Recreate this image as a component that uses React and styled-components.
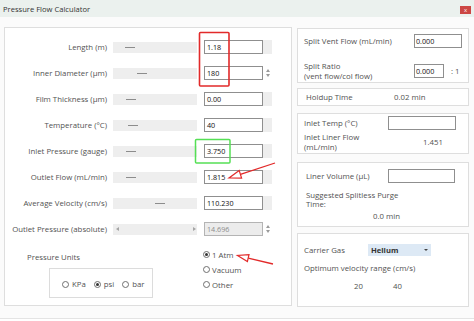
import React from 'react';
import styled, { createGlobalStyle } from 'styled-components';

const Global = createGlobalStyle`
  html, body { margin: 0; padding: 0; background: #fff; }
  body { font-family: "Open Sans", "Liberation Sans", sans-serif; }
`;

const Window = styled.div`
  position: relative;
  width: 474px;
  height: 319px;
  box-sizing: border-box;
  background: #fbfbfb;
  border-bottom: 1px solid #e4e4e4;
  font-family: "Open Sans", "Liberation Sans", sans-serif;
  font-size: 7.8px;
  color: #525252;
  overflow: hidden;
`;

const TitleBar = styled.div`
  height: 17px;
  display: flex;
  align-items: center;
  justify-content: space-between;
  padding: 0 3px;
  background: #ebf1ee;
  color: #333;
  font-size: 7.6px;
`;

const CloseBtn = styled.div`
  width: 11px;
  height: 8px;
  margin-top: 3px;
  background: #cc4744;
  color: #fff;
  font-size: 6px;
  line-height: 8px;
  text-align: center;
`;

const Body = styled.div`
  display: flex;
  gap: 5px;
  padding: 10px 0 0 4px;
`;

const LeftPanel = styled.div`
  width: 288px;
  height: 279px;
  box-sizing: border-box;
  background: #fff;
  border: 1px solid #dedede;
  padding-top: 6px;
`;

const Row = styled.div`
  height: 26px;
  display: flex;
  align-items: center;
`;

const Label = styled.div`
  width: 102px;
  text-align: right;
  white-space: nowrap;
  margin-right: 6px;
`;

const Track = styled.div`
  position: relative;
  width: 84px;
  height: 11px;
  background: #eeeeee;
  margin-right: 7px;
`;

const Thumb = styled.div`
  position: absolute;
  top: 5px;
  left: ${p => p.$at}px;
  width: 10px;
  height: 1px;
  background: #8c8c8c;
`;

const ScrollArrow = styled.div`
  position: absolute;
  top: 3px;
  ${p => (p.$dir === 'left' ? 'left: 3px;' : 'right: 1px;')}
  width: 0;
  height: 0;
  border-top: 2.5px solid transparent;
  border-bottom: 2.5px solid transparent;
  ${p => (p.$dir === 'left' ? 'border-right: 3px solid #a5a5a5;' : 'border-left: 3px solid #a5a5a5;')}
`;

const NumBox = styled.div`
  width: 59px;
  height: 14px;
  box-sizing: border-box;
  border: 1px solid ${p => (p.$disabled ? '#b4b4b4' : '#8f8f8f')};
  background: ${p => (p.$disabled ? '#ececec' : '#fff')};
  color: ${p => (p.$disabled ? '#8d8d8d' : '#111')};
  font-size: 7.2px;
  line-height: 12px;
  padding-left: 2px;
`;

const Strip = styled.div`
  width: 9px;
  height: 14px;
  background: ${p => (p.$plain ? '#fff' : '#eeeeee')};
  display: flex;
  flex-direction: column;
  align-items: center;
  justify-content: center;
  gap: 2px;
`;

const Tri = styled.div`
  width: 0;
  height: 0;
  border-left: 2.5px solid transparent;
  border-right: 2.5px solid transparent;
  ${p => (p.$up ? 'border-bottom: 3px solid #9a9a9a;' : 'border-top: 3px solid #9a9a9a;')}
`;

const BottomArea = styled.div`
  display: flex;
`;

const UnitsCol = styled.div`
  width: 198px;
`;

const UnitsLabel = styled.div`
  padding-left: 22px;
  margin-top: 10px;
  line-height: 10px;
`;

const UnitsBox = styled.div`
  margin: 6px 0 0 44px;
  width: 104px;
  height: 30px;
  box-sizing: border-box;
  border: 1px solid #dcdcdc;
  display: flex;
  align-items: center;
  padding: 2px 0 0 12px;
  gap: 8px;
`;

const RadioCol = styled.div`
  margin-top: 5px;
  display: flex;
  flex-direction: column;
`;

const RadioItem = styled.div`
  display: flex;
  align-items: center;
  gap: ${p => (p.$tight ? 2 : 3)}px;
  height: 15px;
`;

const Circle = styled.span`
  width: 7px;
  height: 7px;
  box-sizing: border-box;
  border: 1px solid #6f6f6f;
  border-radius: 50%;
  display: flex;
  align-items: center;
  justify-content: center;
  background: #fff;
  &::after {
    content: '';
    width: 3px;
    height: 3px;
    border-radius: 50%;
    background: ${p => (p.$on ? '#333' : 'transparent')};
  }
`;

const RightCol = styled.div`
  width: 172px;
  margin-top: 1px;
  display: flex;
  flex-direction: column;
`;

const Panel = styled.div`
  height: ${p => p.$h}px;
  margin-bottom: ${p => p.$mb || 0}px;
  box-sizing: border-box;
  background: #fff;
  border: 1px solid #dedede;
  padding: ${p => p.$pt || 0}px 6px 0 ${p => p.$pl || 6}px;
`;

const Grid = styled.div`
  display: grid;
  grid-template-columns: ${p => p.$col}px 1fr;
  align-items: center;
  row-gap: ${p => p.$gap || 0}px;
`;

const Text = styled.div`
  line-height: ${p => p.$lh || 10}px;
  white-space: nowrap;
`;

const Field = styled.div`
  width: ${p => p.$w}px;
  height: 14px;
  box-sizing: border-box;
  border: 1px solid #8f8f8f;
  background: #fff;
  color: #111;
  font-size: 7.2px;
  line-height: 12px;
  padding-left: 1px;
`;

const Inline = styled.div`
  display: flex;
  align-items: center;
  gap: 7px;
`;

const Value = styled.div`
  padding-left: ${p => p.$pl || 0}px;
  line-height: 10px;
`;

const Select = styled.div`
  width: 63px;
  height: 12px;
  background: #dde9f5;
  display: flex;
  align-items: center;
  justify-content: space-between;
  padding: 0 3px;
  box-sizing: border-box;
  color: #333;
  font-weight: 700;
  font-size: 7.6px;
`;

const Caret = styled.span`
  width: 0;
  height: 0;
  border-left: 2px solid transparent;
  border-right: 2px solid transparent;
  border-top: 2.5px solid #444;
`;

const Nums = styled.div`
  display: flex;
  gap: 30px;
  padding-left: 50px;
  margin-top: 8px;
`;

const Overlay = styled.svg`
  position: absolute;
  left: 0;
  top: 0;
  pointer-events: none;
`;

const rows = [
  { label: 'Length (m)', thumb: 12, value: '1.18' },
  { label: 'Inner Diameter (µm)', thumb: 24, value: '180', spin: true },
  { label: 'Film Thickness (µm)', thumb: 13, value: '0.00' },
  { label: 'Temperature (°C)', thumb: 15, value: '40' },
  { label: 'Inlet Pressure (gauge)', thumb: 13, value: '3.750' },
  { label: 'Outlet Flow (mL/min)', thumb: 13, value: '1.815' },
  { label: 'Average Velocity (cm/s)', thumb: 42, value: '110.230' },
];

function Radio({ on, label, tight }) {
  return (
    <RadioItem $tight={tight}>
      <Circle $on={on} />
      <span>{label}</span>
    </RadioItem>
  );
}

export default function App() {
  return (
    <>
      <Global />
      <Window>
        <TitleBar>
          <span>Pressure Flow Calculator</span>
          <CloseBtn>x</CloseBtn>
        </TitleBar>
        <Body>
          <LeftPanel>
            {rows.map(r => (
              <Row key={r.label}>
                <Label>{r.label}</Label>
                <Track>
                  <Thumb $at={r.thumb} />
                </Track>
                <NumBox>{r.value}</NumBox>
                {r.spin ? (
                  <Strip $plain>
                    <Tri $up />
                    <Tri />
                  </Strip>
                ) : (
                  <Strip />
                )}
              </Row>
            ))}
            <Row>
              <Label>Outlet Pressure (absolute)</Label>
              <Track>
                <ScrollArrow $dir="left" />
                <ScrollArrow $dir="right" />
              </Track>
              <NumBox $disabled>14.696</NumBox>
              <Strip $plain>
                <Tri $up />
                <Tri />
              </Strip>
            </Row>
            <BottomArea>
              <UnitsCol>
                <UnitsLabel>Pressure Units</UnitsLabel>
                <UnitsBox>
                  <Radio label="KPa" />
                  <Radio on label="psi" />
                  <Radio label="bar" />
                </UnitsBox>
              </UnitsCol>
              <RadioCol>
                <Radio on tight label="1 Atm" />
                <Radio tight label="Vacuum" />
                <Radio tight label="Other" />
              </RadioCol>
            </BottomArea>
          </LeftPanel>
          <RightCol>
            <Panel $h={55} $mb={5} $pt={5}>
              <Grid $col={110} $gap={13}>
                <Text>Split Vent Flow (mL/min)</Text>
                <Field $w={48}>0.000</Field>
                <Text>
                  Split Ratio
                  <br />
                  (vent flow/col flow)
                </Text>
                <Inline>
                  <Field $w={30}>0.000</Field>
                  <span>: 1</span>
                </Inline>
              </Grid>
            </Panel>
            <Panel $h={18} $mb={7} $pl={8} $pt={3}>
              <Grid $col={88}>
                <Text>Holdup Time</Text>
                <Value>0.02 min</Value>
              </Grid>
            </Panel>
            <Panel $h={41} $mb={8} $pt={2}>
              <Grid $col={84} $gap={2}>
                <Text>Inlet Temp (°C)</Text>
                <Field $w={68} />
                <Text>
                  Inlet Liner Flow
                  <br />
                  (mL/min)
                </Text>
                <Value $pl={35}>1.451</Value>
              </Grid>
            </Panel>
            <Panel $h={65} $mb={6} $pt={6} $pl={8}>
              <Grid $col={82}>
                <Text>Liner Volume (µL)</Text>
                <Field $w={67} />
              </Grid>
              <Text $lh={9} style={{ marginTop: 8 }}>
                Suggested Splitless Purge
                <br />
                Time:
              </Text>
              <Value $pl={67} style={{ marginTop: 2 }}>0.0 min</Value>
            </Panel>
            <Panel $h={74} $pt={10}>
              <Grid $col={64}>
                <Text>Carrier Gas</Text>
                <Select>
                  <span>Helium</span>
                  <Caret />
                </Select>
              </Grid>
              <Text style={{ marginTop: 7 }}>Optimum velocity range (cm/s)</Text>
              <Nums>
                <span>20</span>
                <span>40</span>
              </Nums>
            </Panel>
          </RightCol>
        </Body>
        <Overlay width="474" height="321" viewBox="0 0 474 321">
          <rect x="199.5" y="32.5" width="29.5" height="53.5" rx="1" fill="none" stroke="#e22a2a" strokeWidth="1.6" />
          <rect x="195.5" y="139.5" width="34.5" height="23.5" rx="1" fill="none" stroke="#55e055" strokeWidth="1.5" />
          <line x1="275" y1="163" x2="240.4" y2="174.3" stroke="#e22a2a" strokeWidth="1.3" />
          <polygon points="229,178 241.6,178.1 239.2,170.5" fill="#fff" stroke="#e22a2a" strokeWidth="1.2" />
          <line x1="273" y1="264" x2="248.2" y2="258.1" stroke="#e22a2a" strokeWidth="1.3" />
          <polygon points="237.5,255.5 247.4,261.5 249,254.7" fill="#fff" stroke="#e22a2a" strokeWidth="1.2" />
        </Overlay>
      </Window>
    </>
  );
}
